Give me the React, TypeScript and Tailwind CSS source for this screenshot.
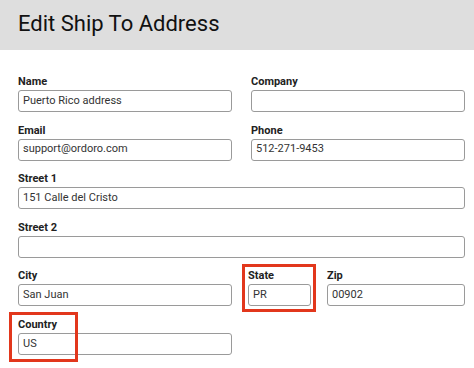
import React from "react";

const font = { fontFamily: "Roboto, Inter, 'Noto Sans', sans-serif" };

function Field({ label, value, className = "" }: { label: string; value?: string; className?: string }) {
  return (
    <div className={`flex flex-col ${className}`}>
      <div className="text-[11px] leading-[14px] font-bold text-[#222] mb-[1px]">{label}</div>
      <div className="h-[22px] border border-[#9a9a9a] rounded-[3px] bg-white px-[4px] flex items-center text-[11px] text-[#333]">
        {value}
      </div>
    </div>
  );
}

export default function App() {
  return (
    <div className="w-[474px] h-[368px] bg-white relative overflow-hidden" style={font}>
      <div className="h-[50px] bg-[#dedede] px-[18px] flex items-center">
        <h1 className="text-[22px] leading-none text-[#111] font-normal mt-[-2px]">Edit Ship To Address</h1>
      </div>
      <div className="pl-[18px] pr-[9px] pt-[25px] flex flex-col gap-[11.6px]">
        <div className="flex gap-[19px]">
          <Field label="Name" value="Puerto Rico address" className="w-[214px]" />
          <Field label="Company" className="w-[214px]" />
        </div>
        <div className="flex gap-[19px]">
          <Field label="Email" value="support@ordoro.com" className="w-[214px]" />
          <Field label="Phone" value="512-271-9453" className="w-[214px]" />
        </div>
        <Field label="Street 1" value="151 Calle del Cristo" />
        <Field label="Street 2" />
        <div className="flex gap-[16px]">
          <Field label="City" value="San Juan" className="w-[214px]" />
          <Field label="State" value="PR" className="w-[63px]" />
          <Field label="Zip" value="00902" className="w-[138px]" />
        </div>
        <div className="flex">
          <Field label="Country" value="US" className="w-[214px]" />
        </div>
      </div>
      <div className="absolute left-[242px] top-[264px] w-[74px] h-[48px] border-[3px] border-[#e2371c] pointer-events-none" />
      <div className="absolute left-[9px] top-[312px] w-[69px] h-[50px] border-[3px] border-[#e2371c] pointer-events-none" />
    </div>
  );
}
